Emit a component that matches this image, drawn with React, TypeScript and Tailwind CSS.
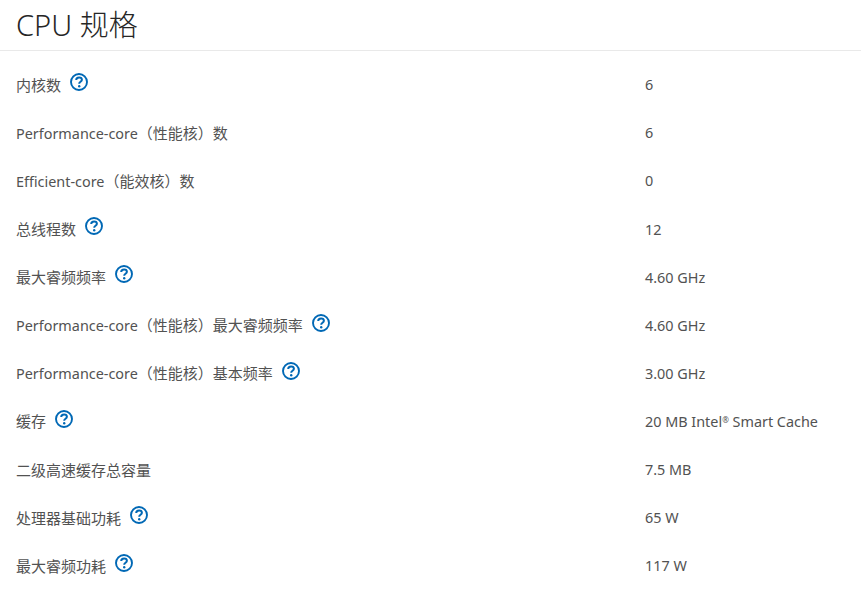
const rows: [string, string, string, boolean][] = [
  ["", "内核数", "6", true],
  ["Performance-core", "（性能核）数", "6", false],
  ["Efficient-core", "（能效核）数", "0", false],
  ["", "总线程数", "12", true],
  ["", "最大睿频频率", "4.60 GHz", true],
  ["Performance-core", "（性能核）最大睿频频率", "4.60 GHz", true],
  ["Performance-core", "（性能核）基本频率", "3.00 GHz", true],
  ["", "缓存", "", true],
  ["", "二级高速缓存总容量", "7.5 MB", false],
  ["", "处理器基础功耗", "65 W", true],
  ["", "最大睿频功耗", "117 W", true],
];

function Help() {
  return (
    <svg width="20" height="20" viewBox="0 0 20 20" fill="none" className="ml-2 -mt-1.5 shrink-0">
      <circle cx="10" cy="10" r="8" stroke="#0068b5" strokeWidth="1.9" />
      <path d="M7.2 8c0-1.6 1.2-2.6 2.9-2.6s2.8.9 2.8 2.4c0 2-2.7 1.9-2.7 3.9" stroke="#0068b5" strokeWidth="2" />
      <circle cx="10.2" cy="14.2" r="1.2" fill="#0068b5" />
    </svg>
  );
}

export default function App() {
  return (
    <div className="h-[597px] w-[861px] overflow-hidden bg-white font-['Noto_Sans','Noto_Sans_CJK_SC',sans-serif] text-[#525252]">
      <h2 className="flex h-[51px] items-center border-b border-[#e9e9e9] pl-4 text-[29px] font-light text-[#262626]">CPU 规格</h2>
      <div className="pt-2.5">
        {rows.map(([latin, cjk, value, help]) => (
          <div key={latin + cjk} className="flex h-[48.1px] items-center pl-4 text-[15px]">
            <div className="flex w-[629px] items-center">
              <span>
                {latin && <span className="text-[14.4px]">{latin}</span>}
                {cjk}
              </span>
              {help && <Help />}
            </div>
            <div className="text-[14.4px]">
              {value || (
                <>
                  20 MB Intel<sup className="text-[8px]">®</sup> Smart Cache
                </>
              )}
            </div>
          </div>
        ))}
      </div>
    </div>
  );
}
